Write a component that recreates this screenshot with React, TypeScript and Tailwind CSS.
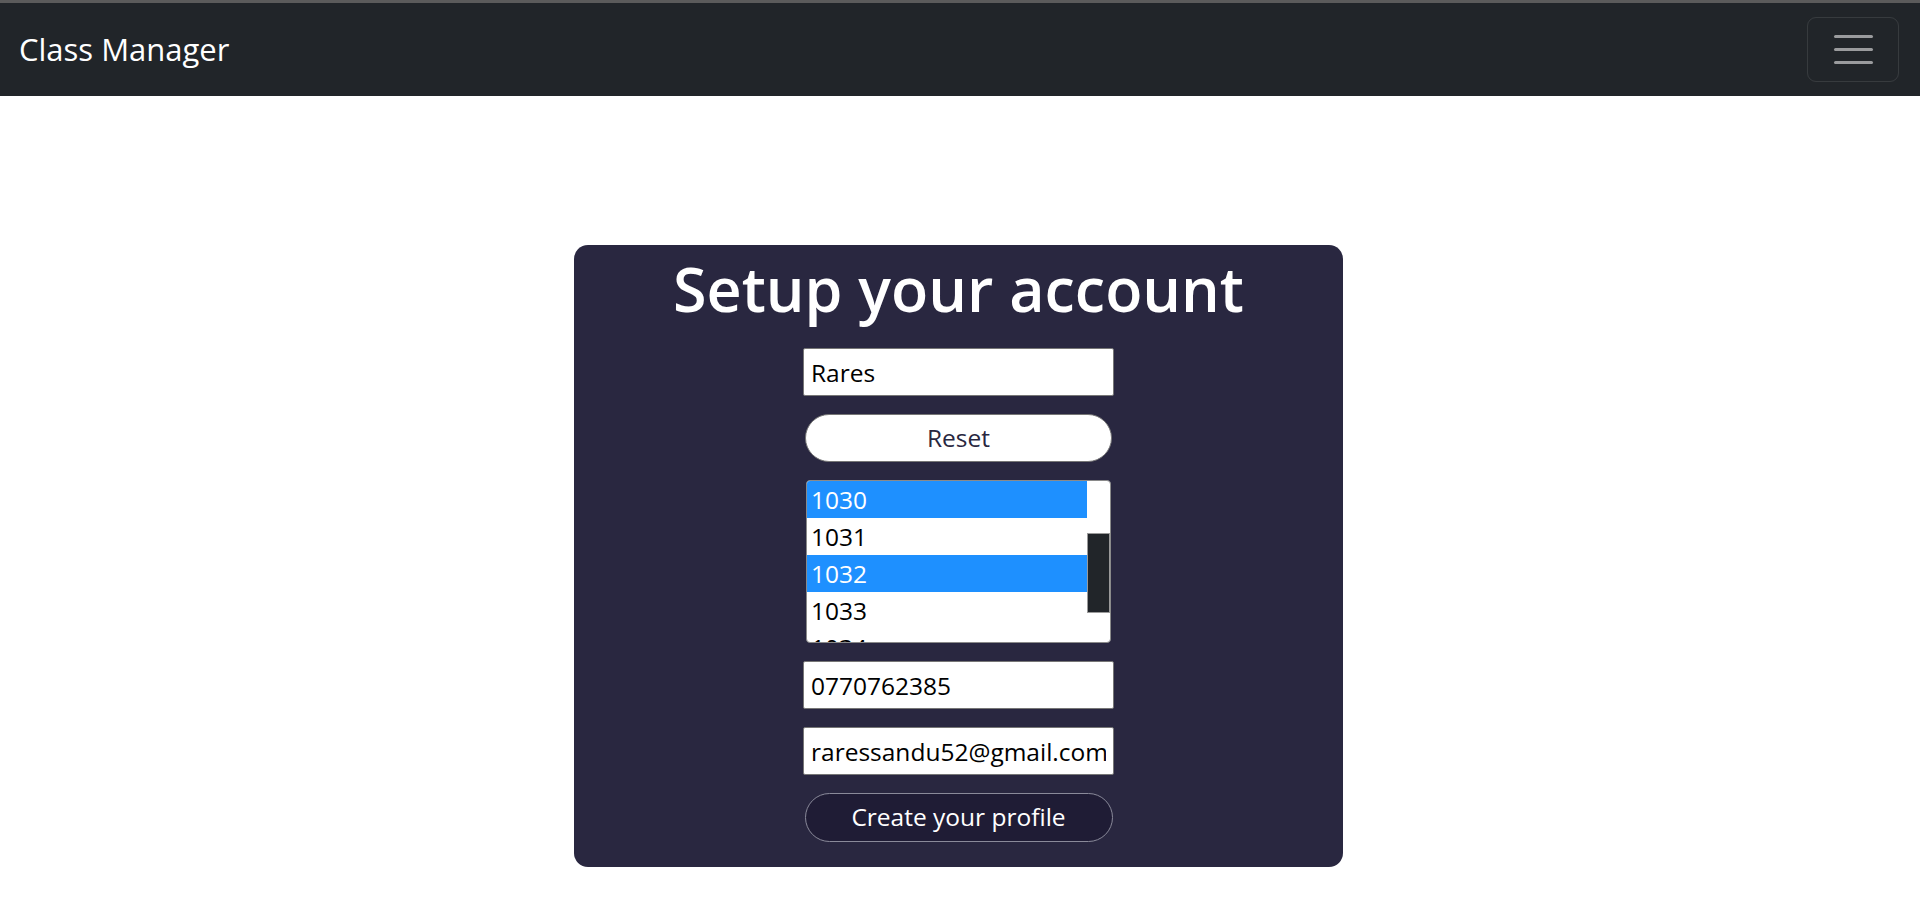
import { useState } from "react";

const groups = ["1030", "1031", "1032", "1033", "1034"];
const font = { fontFamily: '"Open Sans", "Noto Sans", sans-serif' };

function Navbar() {
  return (
    <nav className="border-t-[3px] border-[#5b5b5b] bg-[#212529]">
      <div className="flex h-[93px] items-center justify-between pl-[19px] pr-[21px]">
        <span className="text-[31px] text-white">Class Manager</span>
        <button className="flex h-[65px] w-[92px] flex-col items-center justify-center gap-[10px] rounded-[9px] border border-white/10">
          <span className="block h-[3px] w-[39px] rounded-full bg-[#9a9b9d]" />
          <span className="block h-[3px] w-[39px] rounded-full bg-[#9a9b9d]" />
          <span className="block h-[3px] w-[39px] rounded-full bg-[#9a9b9d]" />
        </button>
      </div>
    </nav>
  );
}

function GroupList() {
  const [selected, setSelected] = useState<string[]>(["1030", "1032"]);
  const toggle = (g: string) =>
    setSelected((s) => (s.includes(g) ? s.filter((x) => x !== g) : [...s, g]));

  return (
    <div className="flex h-[163px] w-[305px] overflow-hidden rounded-[4px] border border-[#8a8a8a] bg-white">
      <div className="flex-1">
        {groups.map((g) => (
          <div
            key={g}
            onClick={() => toggle(g)}
            className={`flex h-[37px] items-center px-[4px] pt-[2px] text-[24.5px] ${
              selected.includes(g) ? "bg-[#1e90ff] text-white" : "text-black"
            }`}
          >
            {g}
          </div>
        ))}
      </div>
      <div className="w-[23px]">
        <div className="mt-[52px] h-[80px] border border-[#9a9a9a] bg-[#212529]" />
      </div>
    </div>
  );
}

export default function App() {
  return (
    <div className="min-h-[904px] bg-white" style={font}>
      <Navbar />
      <div className="flex justify-center pt-[149px] pr-[3px]">
        <div className="flex w-[769px] flex-col items-center rounded-[14px] bg-[#292740] pb-[25px]">
          <h1 className="mb-[15px] text-[61px] font-semibold leading-[88px] text-white">
            Setup your account
          </h1>
          <div className="flex w-[311px] flex-col items-center gap-[18px]">
            <input
              defaultValue="Rares"
              className="h-[48px] w-full rounded-[2px] border border-[#767676] bg-white px-[7px] text-[24.5px] text-black outline-none"
            />
            <button className="h-[48px] w-[307px] rounded-full border border-[#767676] bg-white text-[24.5px] text-[#292740]">
              Reset
            </button>
            <GroupList />
            <input
              defaultValue="0770762385"
              className="h-[48px] w-full rounded-[2px] border border-[#767676] bg-white px-[7px] text-[24.5px] text-black outline-none"
            />
            <input
              defaultValue="raressandu52@gmail.com"
              className="h-[48px] w-full rounded-[2px] border border-[#767676] bg-white px-[7px] text-[24.5px] text-black outline-none"
            />
            <button className="h-[49px] w-[308px] rounded-full border border-[#8a8a9a] bg-[#1f1c35] text-[24.5px] text-white">
              Create your profile
            </button>
          </div>
        </div>
      </div>
    </div>
  );
}
